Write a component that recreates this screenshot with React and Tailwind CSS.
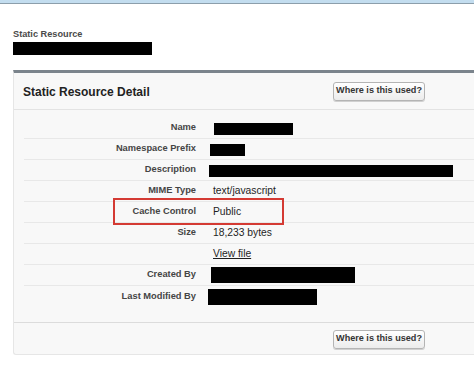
import React from 'react';

const font = { fontFamily: '"Liberation Sans", Arial, Helvetica, sans-serif' };

function Redacted({ w, h = 12, ml = 0 }) {
  return <span className="inline-block bg-black align-middle" style={{ width: w, height: h, marginLeft: ml }} />;
}

function WhereButton() {
  return (
    <button className="h-[19px] w-[92px] rounded-[3px] border border-[#b4b4b4] bg-gradient-to-b from-white to-[#ececec] text-[9.1px] font-bold text-[#333] shadow-[0_1px_0_#d0d0d0]">
      Where is this used?
    </button>
  );
}

const rows = [
  { label: 'Name', value: <Redacted w={79} ml={1} /> },
  { label: 'Namespace Prefix', value: <Redacted w={35} ml={-3} /> },
  { label: 'Description', value: <Redacted w={244} ml={-4} /> },
  { label: 'MIME Type', value: 'text/javascript' },
  { label: 'Cache Control', value: 'Public', marked: true },
  { label: 'Size', value: '18,233 bytes' },
  { label: '', value: <span className="underline">View file</span> },
  { label: 'Created By', value: <Redacted w={144} h={16} ml={-2} /> },
  { label: 'Last Modified By', value: <Redacted w={109} h={16} ml={-5} />, last: true },
];

export default function App() {
  return (
    <div className="h-[369px] w-[474px] overflow-hidden bg-white" style={font}>
      {/* top strip */}
      <div className="h-[4px] border-b border-[#8c9eab] bg-[#c3ddef]" />

      <div className="pl-[13px]">
        <div className="pt-[24px] text-[9.2px] font-bold leading-[12px] text-[#4a4a4a]">Static Resource</div>
        <div className="mt-[2px] h-[13px] w-[139px] bg-black" />

        {/* detail panel */}
        <div className="mt-[15px] mr-[-20px] rounded-bl-[3px] border-t-[3px] border-b border-l border-t-[#7b848c] border-b-[#e6e6e6] border-l-[#e6e6e6] bg-[#f8f8f8]">
          <div className="flex h-[37px] items-center border-b border-[#e3e3e3]">
            <div className="w-[319px] pl-[9px] pt-[1px] text-[12px] font-bold text-[#222]">Static Resource Detail</div>
            <WhereButton />
          </div>

          <div className="ml-[10px] pt-[8px] pb-[15px]">
            {rows.map((r, i) => (
              <div
                key={i}
                className={`relative flex h-[21px] items-center ${r.last ? '' : 'border-b border-[#e8e8e8]'}`}
              >
                <div className="w-[172px] text-right text-[9.3px] font-bold text-[#454545]">{r.label}</div>
                <div className="pl-[17px] text-[10.3px] text-[#1f1f1f]">{r.value}</div>
                {r.marked && (
                  <div className="absolute left-[89px] top-[-4px] h-[27px] w-[171px] border-2 border-[#d43a33]" />
                )}
              </div>
            ))}
          </div>

          <div className="flex h-[32px] items-center border-t border-[#dcdcdc] pt-[1px]">
            <div className="w-[319px]" />
            <WhereButton />
          </div>
        </div>
      </div>
    </div>
  );
}
